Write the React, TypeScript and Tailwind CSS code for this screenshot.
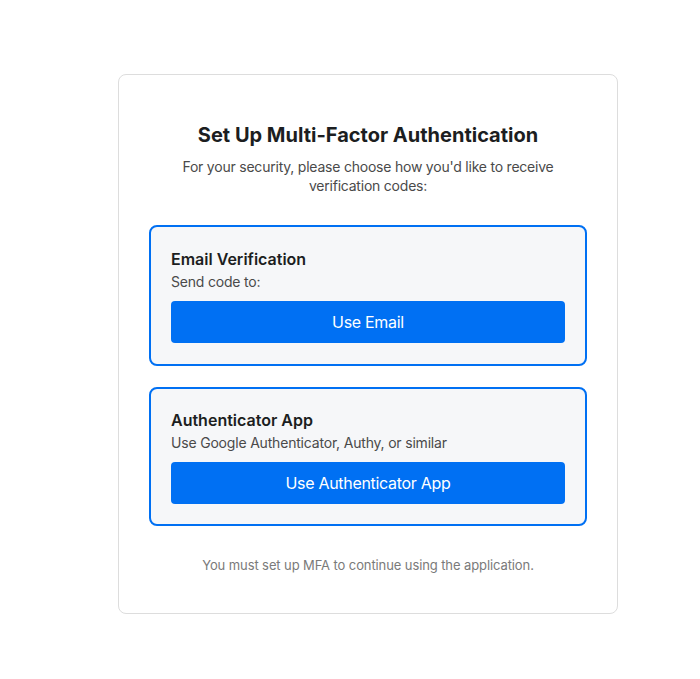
export default function App() {
  return (
    <div className="min-h-[679px] bg-white pt-[74px] pl-[118px] font-['Inter',sans-serif]">
      <div className="w-[500px] rounded-lg border border-[#dddddd] bg-white px-[30px] pt-[46px] pb-[39px]">
        <h2 className="text-center text-[20px] leading-[28px] font-bold text-[#1c1e21]">
          Set Up Multi-Factor Authentication
        </h2>
        <p className="mt-[8px] text-center text-[14px] leading-[19px] tracking-[-0.22px] text-[#4a4a4a]">
          For your security, please choose how you'd like to receive
          <br />
          verification codes:
        </p>

        <div className="mt-[30px] flex flex-col gap-[21px]">
          <OptionBox
            title="Email Verification"
            desc="Send code to:"
            action="Use Email"
            tall
          />
          <OptionBox
            title="Authenticator App"
            desc="Use Google Authenticator, Authy, or similar"
            action="Use Authenticator App"
          />
        </div>

        <p className="mt-[30px] text-center text-[13px] leading-[18px] tracking-[-0.1px] text-[#7a7a7a]">
          You must set up MFA to continue using the application.
        </p>
      </div>
    </div>
  );
}

function OptionBox({
  title,
  desc,
  action,
  tall = false,
}: {
  title: string;
  desc: string;
  action: string;
  tall?: boolean;
}) {
  return (
    <div
      className={`rounded-lg border-2 border-[#0070f3] bg-[#f6f7f9] px-5 ${tall ? "pt-5 pb-[21px]" : "pt-[19px] pb-5"}`}
    >
      <div className="text-[16px] leading-[24px] font-semibold text-[#1c1e21]">{title}</div>
      <div className="mt-[1px] text-[14px] leading-[20px] tracking-[-0.19px] text-[#4a4a4a]">
        {desc}
      </div>
      <button className="mt-[9px] h-[42px] w-full rounded-[4px] bg-[#0070f3] text-[16px] tracking-[-0.3px] text-white">
        {action}
      </button>
    </div>
  );
}
